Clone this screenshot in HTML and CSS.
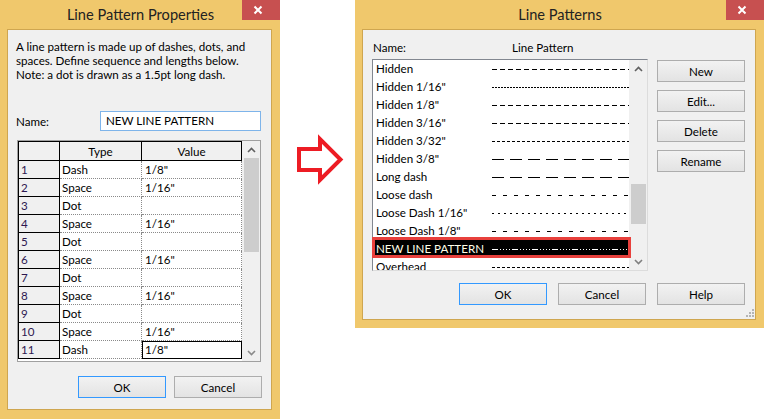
FILE: index.html
```html
<!DOCTYPE html>
<html>
<head>
<meta charset="utf-8">
<link rel="stylesheet" href="styles.css">
</head>
<body>
<div class="screen">
  <div class="win win-props">
    <div class="titlebar">
      <div class="title">Line Pattern Properties</div>
      <div class="close"><svg width="38" height="20" viewBox="0 0 38 20"><path d="M12.5 6.5 L19.5 13.5 M19.5 6.5 L12.5 13.5" stroke="#fff" stroke-width="2" fill="none"/></svg></div>
    </div>
    <div class="client">
      <p class="desc">A line pattern is made up of dashes, dots, and<br>spaces. Define sequence and lengths below.<br>Note: a dot is drawn as a 1.5pt long dash.</p>
      <div class="name-row"><span class="lbl">Name:</span><div class="input">NEW LINE PATTERN</div></div>
      <div class="grid">
        <div class="gbody">
          <div class="grow head"><div class="c num"></div><div class="c type">Type</div><div class="c val">Value</div></div>
          <div class="grow"><div class="c num">1</div><div class="c type">Dash</div><div class="c val">1/8"</div></div>
          <div class="grow"><div class="c num">2</div><div class="c type">Space</div><div class="c val">1/16"</div></div>
          <div class="grow"><div class="c num">3</div><div class="c type">Dot</div><div class="c val"></div></div>
          <div class="grow"><div class="c num">4</div><div class="c type">Space</div><div class="c val">1/16"</div></div>
          <div class="grow"><div class="c num">5</div><div class="c type">Dot</div><div class="c val"></div></div>
          <div class="grow"><div class="c num">6</div><div class="c type">Space</div><div class="c val">1/16"</div></div>
          <div class="grow"><div class="c num">7</div><div class="c type">Dot</div><div class="c val"></div></div>
          <div class="grow"><div class="c num">8</div><div class="c type">Space</div><div class="c val">1/16"</div></div>
          <div class="grow"><div class="c num">9</div><div class="c type">Dot</div><div class="c val"></div></div>
          <div class="grow"><div class="c num">10</div><div class="c type">Space</div><div class="c val">1/16"</div></div>
          <div class="grow"><div class="c num">11</div><div class="c type">Dash</div><div class="c val sel">1/8"</div></div>
        </div>
        <div class="vscroll">
          <div class="sb-btn"><svg width="9" height="6" viewBox="0 0 9 6"><polyline points="1,5 4.5,1.5 8,5" fill="none" stroke="#606060" stroke-width="1.6"/></svg></div>
          <div class="thumb thumb-props"></div>
          <div class="spacer"></div>
          <div class="sb-btn"><svg width="9" height="6" viewBox="0 0 9 6"><polyline points="1,1 4.5,4.5 8,1" fill="none" stroke="#8a8a8a" stroke-width="1.6"/></svg></div>
        </div>
      </div>
      <div class="btns">
        <div class="btn default">OK</div>
        <div class="btn">Cancel</div>
      </div>
    </div>
  </div>

  <svg class="arrow" width="75" height="200" viewBox="0 0 75 200">
    <polygon points="19,149 40,149 40,139 60.5,159.5 40,180 40,170 19,170" fill="#fff" stroke="#ed1c24" stroke-width="4" stroke-linejoin="miter" stroke-miterlimit="3"/>
  </svg>

  <div class="win win-list">
    <div class="titlebar">
      <div class="title">Line Patterns</div>
      <div class="close"><svg width="38" height="20" viewBox="0 0 38 20"><path d="M12.5 6.5 L19.5 13.5 M19.5 6.5 L12.5 13.5" stroke="#fff" stroke-width="2" fill="none"/></svg></div>
    </div>
    <div class="client">
      <div class="lp-main">
        <div class="lp-left">
          <div class="lp-head"><span class="h-name">Name:</span><span>Line Pattern</span></div>
          <div class="listbox">
            <div class="rows">
              <div class="row"><span class="nm">Hidden</span><span class="pat p-hid"></span></div>
              <div class="row"><span class="nm">Hidden 1/16"</span><span class="pat p-h16"></span></div>
              <div class="row"><span class="nm">Hidden 1/8"</span><span class="pat p-hid"></span></div>
              <div class="row"><span class="nm">Hidden 3/16"</span><span class="pat p-hid"></span></div>
              <div class="row"><span class="nm">Hidden 3/32"</span><span class="pat p-h332"></span></div>
              <div class="row"><span class="nm">Hidden 3/8"</span><span class="pat p-long"></span></div>
              <div class="row"><span class="nm">Long dash</span><span class="pat p-long"></span></div>
              <div class="row"><span class="nm">Loose dash</span><span class="pat p-loose"></span></div>
              <div class="row"><span class="nm">Loose Dash 1/16"</span><span class="pat p-l16"></span></div>
              <div class="row"><span class="nm">Loose Dash 1/8"</span><span class="pat p-loose"></span></div>
              <div class="row sel"><span class="nm">NEW LINE PATTERN</span><span class="pat p-new"></span></div>
              <div class="row"><span class="nm">Overhead</span><span class="pat p-over"></span></div>
            </div>
            <div class="vscroll lsb">
              <div class="sb-btn"><svg width="9" height="6" viewBox="0 0 9 6"><polyline points="1,5 4.5,1.5 8,5" fill="none" stroke="#606060" stroke-width="1.6"/></svg></div>
              <div class="thumb thumb-list"></div>
              <div class="spacer"></div>
              <div class="sb-btn"><svg width="9" height="6" viewBox="0 0 9 6"><polyline points="1,1 4.5,4.5 8,1" fill="none" stroke="#808080" stroke-width="1.6"/></svg></div>
            </div>
            <div class="redbox"></div>
          </div>
        </div>
        <div class="lp-btns">
          <div class="btn">New</div>
          <div class="btn">Edit...</div>
          <div class="btn">Delete</div>
          <div class="btn">Rename</div>
        </div>
      </div>
      <div class="lp-bottom">
        <div class="btn default">OK</div>
        <div class="btn">Cancel</div>
        <div class="btn">Help</div>
      </div>
      <svg class="grip" width="8" height="8" viewBox="0 0 8 8">
        <rect x="6" y="0" width="2" height="2" fill="#b4b4b4"/>
        <rect x="3" y="3" width="2" height="2" fill="#b4b4b4"/>
        <rect x="6" y="3" width="2" height="2" fill="#b4b4b4"/>
        <rect x="0" y="6" width="2" height="2" fill="#b4b4b4"/>
        <rect x="3" y="6" width="2" height="2" fill="#b4b4b4"/>
        <rect x="6" y="6" width="2" height="2" fill="#b4b4b4"/>
      </svg>
    </div>
  </div>
</div>
</body>
</html>
```

FILE: styles.css
```css
* { box-sizing: border-box; }
html, body { margin: 0; padding: 0; }
body {
  background: #fff;
  font-family: Lato, "Noto Sans", sans-serif;
  font-size: 11.6px;
  color: #000;
  width: 764px;
  height: 419px;
  overflow: hidden;
}
.screen { display: flex; align-items: flex-start; }

.win {
  display: flex;
  flex-direction: column;
  flex: none;
  background: #f0c86c;
  padding: 0 8px 9px 7px;
}
.win-props { width: 280px; height: 419px; }
.win-list { width: 409px; height: 328px; padding-bottom: 8px; }

.titlebar { display: flex; height: 29px; flex: none; }
.title {
  flex: 1;
  padding-left: 32px;
  text-align: center;
  font-size: 14.6px;
  line-height: 29px;
  color: #222;
  white-space: nowrap;
}
.close {
  width: 38px;
  height: 20px;
  margin-right: -8px;
  background: #c75050;
  display: flex;
}

.client {
  flex: 1;
  min-height: 0;
  display: flex;
  flex-direction: column;
  background: #f0f0f0;
  border: 1px solid #cfa650;
}

/* left dialog */
.desc { margin: 10px 0 0 8px; line-height: 14px; white-space: nowrap; }
.name-row { display: flex; align-items: center; height: 20px; margin: 29px 0 0 8px; }
.lbl { width: 84px; }
.input {
  width: 161px;
  height: 20px;
  border: 1px solid #7eb4ea;
  background: #fff;
  padding-left: 5px;
  line-height: 18px;
  white-space: nowrap;
}

.grid {
  display: flex;
  width: 244px;
  height: 222px;
  margin: 9px 0 0 9px;
  border: 1px solid #a0a0a0;
  background: #fff;
}
.gbody { width: 224px; }
.grow { display: flex; height: 18px; }
.grow.head { height: 20px; }
.c {
  display: flex;
  align-items: center;
  white-space: nowrap;
  border-right: 1px dotted #8a8a8a;
  border-bottom: 1px dotted #8a8a8a;
}
.c.num {
  width: 42px;
  padding-left: 2px;
  background: #f0f0f0;
  color: #2d1850;
  border-left: 1px solid #000;
  border-right: 1px solid #000;
  border-bottom: 1px solid #000;
}
.c.type { width: 82px; padding-left: 2px; }
.c.val { width: 100px; padding-left: 3px; }
.head .c {
  justify-content: center;
  padding: 0;
  background: #f0f0f0;
  border-top: 1px solid #000;
  border-right: 1px solid #000;
  border-bottom: 1px solid #000;
}
.c.val.sel { outline: 1px solid #000; outline-offset: -1px; }

.vscroll {
  width: 18px;
  background: #f0f0f0;
  display: flex;
  flex-direction: column;
}
.sb-btn {
  flex: none;
  height: 17px;
  display: flex;
  align-items: center;
  justify-content: center;
}
.thumb { width: 15px; margin-left: 2px; background: #cdcdcd; flex: none; }
.thumb-props { height: 94px; }
.spacer { flex: 1; }

.btns { display: flex; justify-content: flex-end; gap: 8px; margin-top: 14px; padding-right: 9px; }
.btn {
  width: 88px;
  height: 22px;
  flex: none;
  display: flex;
  align-items: center;
  justify-content: center;
  border: 1px solid #adadad;
  background: linear-gradient(#f2f2f2, #e3e3e3);
  color: #000;
}
.btn.default { border-color: #3399ff; }

.arrow { flex: none; display: block; }

/* right dialog */
.lp-main { display: flex; }
.lp-left { width: 276px; margin-left: 9px; }
.lp-head { display: flex; height: 20px; margin-top: 9px; padding-left: 1px; line-height: 18px; }
.h-name { width: 139px; }
.listbox {
  position: relative;
  display: flex;
  height: 212px;
  border: 1px solid;
  border-color: #828790 #dcdcdc #dcdcdc #828790;
  background: #fff;
}
.rows { width: 256px; overflow: hidden; }
.row { display: flex; height: 18px; flex: none; }
.row .nm { width: 119px; padding-left: 3px; line-height: 18px; white-space: nowrap; }
.row .pat { flex: 1; height: 1px; margin-top: 9px; }
.row.sel { background: #000; color: #ffffe8; }
.lsb { flex: none; }
.thumb-list { height: 40px; margin-top: 107px; }
.redbox {
  position: absolute;
  left: -1px;
  top: 177px;
  width: 259px;
  height: 21px;
  border: 3px solid #e8403c;
}

.p-hid { background: repeating-linear-gradient(to right, #000 0 5px, transparent 5px 8px); }
.p-h16 { background: repeating-linear-gradient(to right, #000 0 2px, transparent 2px 3px); }
.p-h332 { background: repeating-linear-gradient(to right, #000 0 3px, transparent 3px 5px); }
.p-long { background: repeating-linear-gradient(to right, #000 0 12px, transparent 12px 18px); }
.p-loose { background: repeating-linear-gradient(to right, #000 0 4px, transparent 4px 11px); }
.p-l16 { background: repeating-linear-gradient(to right, #000 0 2px, transparent 2px 6px); }
.p-over { background: repeating-linear-gradient(to right, #000 0 3px, transparent 3px 5px); }
.p-new {
  background: repeating-linear-gradient(to right,
    #fff 0 6px, transparent 6px 8px,
    #fff 8px 9px, transparent 9px 11px,
    #fff 11px 12px, transparent 12px 14px,
    #fff 14px 15px, transparent 15px 17px,
    #fff 17px 18px, transparent 18px 20px);
}

.lp-btns { display: flex; flex-direction: column; gap: 8px; margin: 30px 0 0 9px; }
.lp-bottom { display: flex; justify-content: flex-end; gap: 11px; margin-top: 12px; padding-right: 10px; }
.grip { display: block; align-self: flex-end; margin: auto 1px 2px 0; flex: none; }
```
